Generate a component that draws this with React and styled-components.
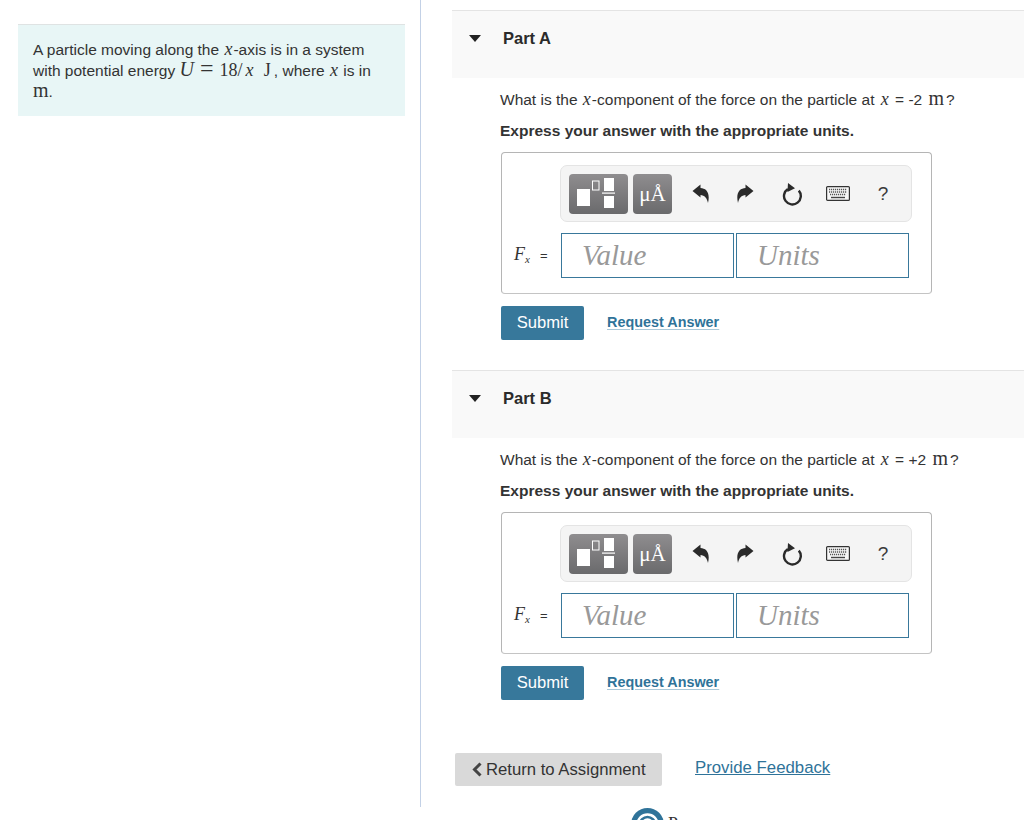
import React from "react";
import styled, { createGlobalStyle } from "styled-components";

const GlobalStyle = createGlobalStyle`
  html, body {
    margin: 0;
    padding: 0;
    height: 820px;
    overflow: hidden;
    background: #fff;
  }
  body {
    font-family: "Liberation Sans", Arial, sans-serif;
    color: #333;
    font-size: 15.5px;
  }
`;

const Page = styled.div`
  display: flex;
  width: 1024px;
  height: 820px;
  overflow: hidden;
`;

const LeftColumn = styled.aside`
  width: 421px;
  height: 807px;
  flex: none;
  box-sizing: border-box;
  border-right: 1px solid #c3d1e6;
  padding-top: 24px;
`;

const Intro = styled.div`
  margin-left: 18px;
  width: 387px;
  height: 92px;
  box-sizing: border-box;
  padding: 14px 28px 0 15px;
  background: #e8f6f6;
  border-top: 1px solid #dfe3e3;
  line-height: 21px;
`;

const Math = styled.span`
  font-family: "Liberation Serif", "DejaVu Serif", serif;
  font-size: ${(p) => p.$size || 18}px;
  font-style: ${(p) => (p.$upright ? "normal" : "italic")};
  line-height: 0;
  margin: 0 ${(p) => p.$space || 0}px;
  color: #333;
`;

const RightColumn = styled.main`
  flex: 1;
  padding: 10px 0 0 31px;
  min-width: 0;
`;

const PartSection = styled.section`
  margin-bottom: 30px;
`;

const PartHeader = styled.header`
  height: 68px;
  box-sizing: border-box;
  display: flex;
  align-items: flex-start;
  padding: 20px 0 0 17px;
  background: #f9f9f9;
  border-top: 1px solid #e4e4e4;
`;

const Caret = styled.span`
  width: 0;
  height: 0;
  margin-top: 4px;
  border-left: 6.5px solid transparent;
  border-right: 6.5px solid transparent;
  border-top: 7px solid #222;
`;

const PartTitle = styled.h2`
  margin: 0 0 0 22px;
  font-size: 16.5px;
  line-height: 15px;
  font-weight: 700;
  color: #2b2b2b;
`;

const PartBody = styled.div`
  padding: 12px 0 0 49px;
`;

const Question = styled.p`
  margin: 0 0 0 -1px;
  line-height: 20px;
  white-space: nowrap;
`;

const Instruction = styled.p`
  margin: 11px 0 0 -1px;
  line-height: 20px;
  font-weight: 700;
  white-space: nowrap;
`;

const AnswerBox = styled.div`
  width: 431px;
  height: 142px;
  box-sizing: border-box;
  margin-top: 11px;
  padding: 12px 19px 0 0;
  display: flex;
  flex-direction: column;
  align-items: flex-end;
  border: 1px solid #b5b5b5;
  border-bottom-color: #c4c4c4;
  border-radius: 4px;
`;

const Toolbar = styled.div`
  width: 352px;
  height: 57px;
  box-sizing: border-box;
  display: flex;
  align-items: center;
  padding-left: 8px;
  background: #f4f4f4;
  border: 1px solid #e4e4e4;
  border-radius: 7px;
`;

const TemplateButton = styled.div`
  width: ${(p) => p.$width}px;
  height: 40px;
  margin-right: ${(p) => p.$gap || 0}px;
  flex: none;
  display: flex;
  align-items: center;
  justify-content: center;
  border-radius: 4px;
  background: linear-gradient(#8f8d8f, #6a6a6c);
  color: #fff;
`;

const UnitsGlyph = styled.span`
  font-family: "Liberation Serif", serif;
  font-size: 21px;
  line-height: 1;
  margin-top: 1px;
`;

const ToolIcon = styled.div`
  width: ${(p) => p.$width}px;
  flex: none;
  display: flex;
  justify-content: center;
  color: #2a2a2a;
`;

const HelpGlyph = styled.span`
  font-size: 19px;
  line-height: 20px;
  color: #3a3a3a;
`;

const InputRow = styled.div`
  display: flex;
  align-items: center;
  margin-top: 11px;
  margin-right: 3px;
`;

const VarLabel = styled.div`
  width: 47px;
  margin-left: -47px;
  font-size: 13px;
  white-space: nowrap;
`;

const Sub = styled.span`
  font-size: 11px;
  font-style: italic;
  font-family: "Liberation Serif", serif;
  line-height: 0;
  vertical-align: -3px;
  margin-right: 10px;
`;

const Field = styled.div`
  width: 173px;
  height: 45px;
  box-sizing: border-box;
  margin-left: ${(p) => p.$gap || 0}px;
  padding-left: 20px;
  display: flex;
  align-items: center;
  border: 1px solid #39789b;
  font-family: "Liberation Serif", serif;
  font-style: italic;
  font-size: 29px;
  color: #999;
`;

const Actions = styled.div`
  display: flex;
  align-items: center;
  margin-top: 12px;
`;

const SubmitButton = styled.button`
  width: 83px;
  height: 34px;
  padding: 0;
  border: 0;
  border-radius: 2px;
  background: #37789b;
  color: #fff;
  font: 16.6px "Liberation Sans", Arial, sans-serif;
`;

const RequestLink = styled.a`
  margin-left: 23px;
  color: #2f7399;
  font-size: 14.4px;
  font-weight: 700;
  text-decoration: underline;
  text-decoration-color: #a9c8d8;
  text-underline-offset: 2px;
  margin-top: -3px;
`;

const FooterRow = styled.div`
  display: flex;
  align-items: flex-start;
  margin-top: 53px;
  margin-left: 3px;
`;

const ReturnButton = styled.div`
  width: 207px;
  height: 33px;
  display: flex;
  align-items: center;
  gap: 3px;
  padding-left: 16px;
  box-sizing: border-box;
  background: #d9d9d9;
  border-radius: 2px;
  color: #333;
  font-size: 16.7px;
  white-space: nowrap;
`;

const FeedbackLink = styled.a`
  margin: 5px 0 0 33px;
  color: #2f7399;
  font-size: 16.8px;
  line-height: 20px;
  text-decoration: underline;
`;

const LogoRow = styled.div`
  display: flex;
  gap: 4px;
  margin: 22px 0 0 179px;
`;

const LogoMark = styled.div`
  width: 33px;
  height: 33px;
  flex: none;
  color: #2f7399;
`;

const LogoWord = styled.span`
  font-family: "Liberation Serif", serif;
  font-size: 18px;
  line-height: 20px;
  margin-top: 6px;
  color: #333;
`;

const UndoIcon = ({ flip }) => (
  <svg width="18" height="20" viewBox="0 0 18 20" style={flip ? { transform: "scaleX(-1)" } : undefined}>
    <path d="M0.5 7 L8.5 0.5 V4 C14 4.2 18.5 8.5 16 19 C15 14 12.5 11.2 8.5 11 V13.5 Z" fill="currentColor" />
  </svg>
);

const RedoIcon = () => (
  <svg width="22" height="24" viewBox="0 0 22 24">
    <path d="M16.8 8.6 A8.4 8.4 0 1 1 5.8 7" fill="none" stroke="currentColor" strokeWidth="2.4" />
    <path d="M6 1 L13 6.2 L5.4 10 Z" fill="currentColor" />
  </svg>
);

const KeyboardIcon = () => (
  <svg width="24" height="15" viewBox="0 0 24 15">
    <rect x="0.6" y="0.6" width="22.8" height="13.8" rx="1" fill="#f7f7f7" stroke="#333" strokeWidth="1.2" />
    <path d="M3 3.5 H21 M3 6 H21 M4 8.5 H20" stroke="#555" strokeWidth="1.3" strokeDasharray="1.2 0.8" />
    <path d="M5 11.5 H19" stroke="#444" strokeWidth="1.4" />
  </svg>
);

const FractionIcon = () => (
  <svg width="44" height="32" viewBox="0 0 44 32">
    <rect x="0" y="11" width="13" height="17" fill="#fff" />
    <rect x="15.5" y="3" width="6.5" height="9" fill="none" stroke="#fff" strokeWidth="1" />
    <rect x="27" y="0" width="10" height="13" fill="#fff" />
    <rect x="25" y="14.5" width="13" height="1.2" fill="#fff" />
    <rect x="27" y="18" width="10" height="12" fill="#fff" />
  </svg>
);

const LogoIcon = () => (
  <svg width="33" height="33" viewBox="0 0 33 33">
    <circle cx="16.5" cy="16.5" r="16.5" fill="currentColor" />
    <circle cx="16.5" cy="16.5" r="10" fill="none" stroke="#fff" strokeWidth="2.5" />
    <circle cx="16.5" cy="16.5" r="5" fill="none" stroke="#fff" strokeWidth="2.5" />
  </svg>
);

const ChevronLeft = () => (
  <svg width="12" height="15" viewBox="0 0 12 15">
    <path d="M9.5 1.5 L3.5 7.5 L9.5 13.5" fill="none" stroke="#444" strokeWidth="3" />
  </svg>
);

const MathX = ({ space = 1 }) => <Math $space={space}>x</Math>;

const Part = ({ title, sign }) => (
  <PartSection>
    <PartHeader>
      <Caret />
      <PartTitle>{title}</PartTitle>
    </PartHeader>
    <PartBody>
      <Question>
        What is the <MathX />-component of the force on the particle at <MathX space={2} /> = {sign}2{" "}
        <Math $upright $size={20} $space={2}>m</Math>?
      </Question>
      <Instruction>Express your answer with the appropriate units.</Instruction>
      <AnswerBox>
        <Toolbar>
          <TemplateButton $width={59} $gap={5}>
            <FractionIcon />
          </TemplateButton>
          <TemplateButton $width={39}>
            <UnitsGlyph>μÅ</UnitsGlyph>
          </TemplateButton>
          <ToolIcon $width={58}>
            <UndoIcon />
          </ToolIcon>
          <ToolIcon $width={30}>
            <UndoIcon flip />
          </ToolIcon>
          <ToolIcon $width={66}>
            <RedoIcon />
          </ToolIcon>
          <ToolIcon $width={24}>
            <KeyboardIcon />
          </ToolIcon>
          <ToolIcon $width={66}>
            <HelpGlyph>?</HelpGlyph>
          </ToolIcon>
        </Toolbar>
        <InputRow>
          <VarLabel>
            <Math $size={18}>F</Math>
            <Sub>x</Sub>=
          </VarLabel>
          <Field>Value</Field>
          <Field $gap={2}>Units</Field>
        </InputRow>
      </AnswerBox>
      <Actions>
        <SubmitButton>Submit</SubmitButton>
        <RequestLink>Request Answer</RequestLink>
      </Actions>
    </PartBody>
  </PartSection>
);

export default function App() {
  return (
    <Page>
      <GlobalStyle />
      <LeftColumn>
        <Intro>
          A particle moving along the <MathX />-axis is in a system with potential energy{" "}
          <Math $size={20}>U</Math>
          <Math $upright $size={24} $space={6}>=</Math>
          <Math $upright>18/</Math>
          <Math $space={3}>x</Math> <Math $upright $space={3}>J</Math>, where <MathX /> is in{" "}
          <Math $upright $size={20}>m</Math>.
        </Intro>
      </LeftColumn>
      <RightColumn>
        <Part title="Part A" sign="-" />
        <Part title="Part B" sign="+" />
        <FooterRow>
          <ReturnButton>
            <ChevronLeft />
            Return to Assignment
          </ReturnButton>
          <FeedbackLink>Provide Feedback</FeedbackLink>
        </FooterRow>
        <LogoRow>
          <LogoMark>
            <LogoIcon />
          </LogoMark>
          <LogoWord>Pearson</LogoWord>
        </LogoRow>
      </RightColumn>
    </Page>
  );
}
